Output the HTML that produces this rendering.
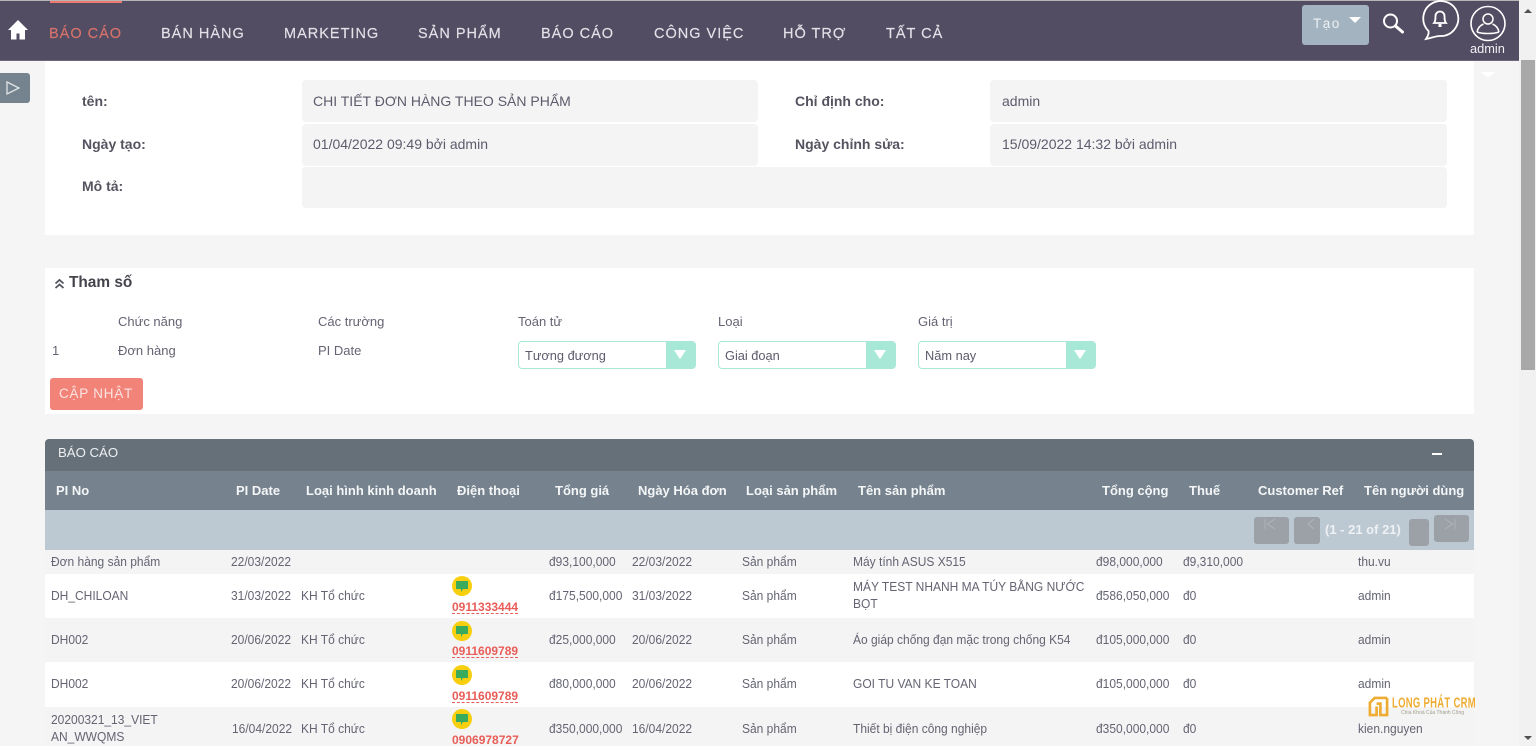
<!DOCTYPE html>
<html lang="vi"><head><meta charset="utf-8"><title>Báo cáo</title>
<style>
html,body{margin:0;padding:0;width:1536px;height:746px;overflow:hidden;background:#f5f5f5;font-family:"Liberation Sans","Noto Sans CJK SC",sans-serif;color:#5a5a6b;font-size:12px}
#w{position:absolute;left:0;top:0;width:1536px;height:746px;overflow:hidden;filter:blur(.3px)}
.a{position:absolute}
.t{position:absolute;white-space:nowrap;line-height:16px}
.n{color:#e4e2e8;font-size:14.500px;letter-spacing:1px;top:26px;-webkit-text-stroke:.15px #e4e2e8}
.l{font-size:14px;font-weight:bold;color:#55535f}
.v{font-size:14px;color:#5d5b6c}
.f{position:absolute;background:#f4f4f4;border-radius:4px}
.p{font-size:13px;color:#646473;transform:scaleX(.923);transform-origin:0 50%}
.q{font-size:13px;color:#646473}
.h{color:#f4f6f7;font-weight:bold;font-size:13px;top:483px}
.ph{color:#e85d58;font-weight:bold;font-size:12px;border-bottom:1px dashed #e85d58;line-height:12px}
.sel{position:absolute;top:341px;width:176px;height:26px;border:1px solid #a8e8d6;border-radius:4px;background:#fff}
.sel span{position:absolute;left:6px;top:6px;font-size:12.8px;line-height:16px;color:#5d5b6c;white-space:nowrap}
.sel i{position:absolute;right:0;top:0;width:29px;height:26px;background:#a8e8d6;border-radius:0 3px 3px 0}
.sel i:after{content:"";position:absolute;left:8px;top:8px;border-left:6px solid transparent;border-right:6px solid transparent;border-top:9px solid #fff}
.pg{position:absolute;background:#9ba1a6;border-radius:3px}
.r{position:absolute;left:45px;width:1429px}
</style></head><body><div id="w">

<!-- top nav -->
<div class="a" style="left:0;top:0;width:1519px;height:1px;background:#b5b5b5"></div>
<div class="a" style="left:0;top:1px;width:1519px;height:59px;background:#534d63"></div>
<div class="a" style="left:0;top:60px;width:1519px;height:1px;background:#6d6878"></div>
<div class="a" style="left:50px;top:1px;width:72px;height:2px;background:#f0796f"></div>
<svg class="a" style="left:7px;top:19px" width="22" height="22" viewBox="0 0 22 22"><path d="M11 1L1 11h3v9.500h5.500v-6h3v6H18V11h3z" fill="#fff"/></svg>
<span class="t n" style="left:49px;color:#d9726b;-webkit-text-stroke:.15px #d9726b">BÁO CÁO</span>
<span class="t n" style="left:161px">BÁN HÀNG</span>
<span class="t n" style="left:284px">MARKETING</span>
<span class="t n" style="left:418px">SẢN PHẨM</span>
<span class="t n" style="left:541px">BÁO CÁO</span>
<span class="t n" style="left:654px">CÔNG VIỆC</span>
<span class="t n" style="left:783px">HỖ TRỢ</span>
<span class="t n" style="left:886px">TẤT CẢ</span>

<div class="a" style="left:1302px;top:5px;width:67px;height:40px;background:#a3b3c0;border-radius:3px"></div>
<span class="t" style="left:1313px;top:16px;color:#eef1f3;font-size:13.5px;letter-spacing:1.500px">Tạo</span>
<div class="a" style="left:1349px;top:17px;border-left:6px solid transparent;border-right:6px solid transparent;border-top:6px solid #fff"></div>
<svg class="a" style="left:1380px;top:11px" width="26" height="24" viewBox="0 0 26 24"><circle cx="10.500" cy="10" r="6.500" fill="none" stroke="#fff" stroke-width="2"/><path d="M15.500 15l7 6" stroke="#fff" stroke-width="3" stroke-linecap="round"/></svg>
<svg class="a" style="left:1420px;top:0" width="40" height="42" viewBox="0 0 40 42"><path d="M6 39c2-3 3-6 2.500-8A17.500 17.500 0 1 1 20 36c-4 0-9 2-14 3z" fill="none" stroke="#fff" stroke-width="1.800"/><path d="M14 23c1.500-2 1.500-4 1.500-7a4.500 4.500 0 0 1 9 0c0 3 0 5 1.500 7z" fill="none" stroke="#fff" stroke-width="1.800"/><rect x="18.500" y="24" width="3" height="3" fill="#fff"/></svg>
<svg class="a" style="left:1469px;top:5px" width="38" height="38" viewBox="0 0 38 38"><circle cx="19" cy="18.500" r="17" fill="none" stroke="#fff" stroke-width="1.600"/><circle cx="19" cy="14" r="5" fill="none" stroke="#fff" stroke-width="1.500"/><path d="M8 27c1-5 4-7 6.500-8M30 27c-1-5-4-7-6.500-8M8 27c5 2 17 2 22 0" fill="none" stroke="#fff" stroke-width="1.500"/></svg>
<span class="t" style="left:1470px;top:41px;color:#f1f0f3;font-size:12.8px">admin</span>

<!-- scrollbar -->
<div class="a" style="left:1519px;top:0;width:17px;height:746px;background:#f1f1f1"></div>
<div class="a" style="left:1521px;top:60px;width:14px;height:310px;background:#a8a8a8"></div>
<div class="a" style="left:1524px;top:9px;border-left:4px solid transparent;border-right:4px solid transparent;border-bottom:4px solid #505050"></div>
<div class="a" style="left:1524px;top:736px;border-left:4px solid transparent;border-right:4px solid transparent;border-top:4px solid #505050"></div>
<div class="a" style="left:1481px;top:72px;border-left:7px solid transparent;border-right:7px solid transparent;border-top:6px solid #fff"></div>

<!-- side toggle -->
<div class="a" style="left:0;top:73px;width:30px;height:30px;background:#75838e;border-radius:0 3px 3px 0"></div>
<svg class="a" style="left:5px;top:80px" width="16" height="16" viewBox="0 0 16 16"><path d="M2 2l12 6-12 6z" fill="none" stroke="#dfe5e8" stroke-width="1.300"/></svg>

<!-- detail panel -->
<div class="a" style="left:45px;top:61px;width:1429px;height:174px;background:#fff"></div>
<span class="t l" style="left:82px;top:93px">tên:</span>
<div class="f" style="left:302px;top:80px;width:456px;height:42px"></div>
<span class="t v" style="left:313px;top:93px">CHI TIẾT ĐƠN HÀNG THEO SẢN PHẨM</span>
<span class="t l" style="left:795px;top:93px">Chỉ định cho:</span>
<div class="f" style="left:990px;top:80px;width:457px;height:42px"></div>
<span class="t v" style="left:1002px;top:93px">admin</span>
<span class="t l" style="left:82px;top:136px">Ngày tạo:</span>
<div class="f" style="left:302px;top:124px;width:456px;height:42px"></div>
<span class="t v" style="left:313px;top:136px">01/04/2022 09:49 bởi admin</span>
<span class="t l" style="left:795px;top:136px">Ngày chỉnh sửa:</span>
<div class="f" style="left:990px;top:124px;width:457px;height:42px"></div>
<span class="t v" style="left:1002px;top:136px">15/09/2022 14:32 bởi admin</span>
<span class="t l" style="left:82px;top:178px">Mô tả:</span>
<div class="f" style="left:302px;top:167px;width:1145px;height:41px"></div>

<!-- params panel -->
<div class="a" style="left:45px;top:268px;width:1429px;height:146px;background:#fff"></div>
<svg class="a" style="left:54px;top:278px" width="11" height="11" viewBox="0 0 11 11"><path d="M1.500 5.500L5.500 2l4 3.500M1.500 10L5.500 6.500l4 3.500" fill="none" stroke="#55555f" stroke-width="1.800"/></svg>
<span class="t" style="left:69px;top:275px;font-size:15.400px;font-weight:bold;color:#44444c">Tham số</span>
<span class="t q" style="left:118px;top:314px">Chức năng</span>
<span class="t q" style="left:318px;top:314px">Các trường</span>
<span class="t q" style="left:518px;top:314px">Toán tử</span>
<span class="t q" style="left:718px;top:314px">Loại</span>
<span class="t q" style="left:918px;top:314px">Giá trị</span>
<span class="t q" style="left:52px;top:343px">1</span>
<span class="t q" style="left:118px;top:343px">Đơn hàng</span>
<span class="t q" style="left:318px;top:343px">PI Date</span>
<div class="sel" style="left:518px"><span>Tương đương</span><i></i></div>
<div class="sel" style="left:718px"><span>Giai đoạn</span><i></i></div>
<div class="sel" style="left:918px"><span>Năm nay</span><i></i></div>
<div class="a" style="left:50px;top:378px;width:93px;height:32px;background:#f28379;border-radius:3px"></div>
<span class="t" style="left:59px;top:386px;color:#fbe4e1;font-size:13.5px;letter-spacing:.75px">CẬP NHẬT</span>

<!-- report -->
<div class="a" style="left:45px;top:439px;width:1429px;height:32px;background:#657079;border-radius:4px 4px 0 0"></div>
<span class="t" style="left:58px;top:445px;color:#eef0f2;font-size:13.2px">BÁO CÁO</span>
<div class="a" style="left:1432px;top:453px;width:10px;height:2px;background:#fff"></div>
<div class="a" style="left:45px;top:471px;width:1429px;height:39px;background:#76838e"></div>
<span class="t h" style="left:56px">PI No</span>
<span class="t h" style="left:236px">PI Date</span>
<span class="t h" style="left:306px">Loại hình kinh doanh</span>
<span class="t h" style="left:457px">Điện thoại</span>
<span class="t h" style="left:555px">Tổng giá</span>
<span class="t h" style="left:638px">Ngày Hóa đơn</span>
<span class="t h" style="left:746px">Loại sản phẩm</span>
<span class="t h" style="left:858px">Tên sản phẩm</span>
<span class="t h" style="left:1102px">Tổng cộng</span>
<span class="t h" style="left:1189px">Thuế</span>
<span class="t h" style="left:1258px">Customer Ref</span>
<span class="t h" style="left:1364px">Tên người dùng</span>

<div class="a" style="left:45px;top:510px;width:1429px;height:40px;background:#bcc8d2"></div>
<div class="pg" style="left:1254px;top:517px;width:35px;height:27px"></div>
<div class="pg" style="left:1294px;top:517px;width:26px;height:27px"></div>
<div class="pg" style="left:1409px;top:519px;width:20px;height:27px"></div>
<div class="pg" style="left:1434px;top:515px;width:35px;height:27px"></div>
<svg class="a" style="left:1254px;top:515px" width="215" height="20" viewBox="0 0 215 20"><path d="M11 4v10M21 4l-8 5 8 5M60 4l-6 5 6 5M191 4l8 5-8 5M201 4v10" fill="none" stroke="#a9b2b8" stroke-width="1.200"/></svg>
<span class="t" style="left:1325px;top:522px;color:#eef1f4;font-weight:bold;font-size:13px">(1 - 21 of 21)</span>

<!-- rows -->
<div class="r" style="top:550px;height:24px;background:#f4f4f4"></div>
<div class="r" style="top:574px;height:44px;background:#fff"></div>
<div class="r" style="top:618px;height:44px;background:#f4f4f4"></div>
<div class="r" style="top:662px;height:45px;background:#fff"></div>
<div class="r" style="top:707px;height:39px;background:#f4f4f4"></div>

<span class="t p" style="left:51px;top:554px">Đơn hàng sản phẩm</span>
<span class="t p" style="left:231px;top:554px">22/03/2022</span>
<span class="t p" style="left:549px;top:554px">đ93,100,000</span>
<span class="t p" style="left:632px;top:554px">22/03/2022</span>
<span class="t p" style="left:742px;top:554px">Sản phẩm</span>
<span class="t p" style="left:853px;top:554px">Máy tính ASUS X515</span>
<span class="t p" style="left:1096px;top:554px">đ98,000,000</span>
<span class="t p" style="left:1183px;top:554px">đ9,310,000</span>
<span class="t p" style="left:1358px;top:554px">thu.vu</span>

<span class="t p" style="left:51px;top:588px">DH_CHILOAN</span>
<span class="t p" style="left:231px;top:588px">31/03/2022</span>
<span class="t p" style="left:301px;top:588px">KH Tổ chức</span>
<span class="t p" style="left:549px;top:588px">đ175,500,000</span>
<span class="t p" style="left:632px;top:588px">31/03/2022</span>
<span class="t p" style="left:742px;top:588px">Sản phẩm</span>
<span class="t p" style="left:853px;top:579px">MÁY TEST NHANH MA TÚY BẰNG NƯỚC</span>
<span class="t p" style="left:853px;top:596px">BỌT</span>
<span class="t p" style="left:1096px;top:588px">đ586,050,000</span>
<span class="t p" style="left:1183px;top:588px">đ0</span>
<span class="t p" style="left:1358px;top:588px">admin</span>

<span class="t p" style="left:51px;top:632px">DH002</span>
<span class="t p" style="left:231px;top:632px">20/06/2022</span>
<span class="t p" style="left:301px;top:632px">KH Tổ chức</span>
<span class="t p" style="left:549px;top:632px">đ25,000,000</span>
<span class="t p" style="left:632px;top:632px">20/06/2022</span>
<span class="t p" style="left:742px;top:632px">Sản phẩm</span>
<span class="t p" style="left:853px;top:632px">Áo giáp chống đạn mặc trong chống K54</span>
<span class="t p" style="left:1096px;top:632px">đ105,000,000</span>
<span class="t p" style="left:1183px;top:632px">đ0</span>
<span class="t p" style="left:1358px;top:632px">admin</span>

<span class="t p" style="left:51px;top:676px">DH002</span>
<span class="t p" style="left:231px;top:676px">20/06/2022</span>
<span class="t p" style="left:301px;top:676px">KH Tổ chức</span>
<span class="t p" style="left:549px;top:676px">đ80,000,000</span>
<span class="t p" style="left:632px;top:676px">20/06/2022</span>
<span class="t p" style="left:742px;top:676px">Sản phẩm</span>
<span class="t p" style="left:853px;top:676px">GOI TU VAN KE TOAN</span>
<span class="t p" style="left:1096px;top:676px">đ105,000,000</span>
<span class="t p" style="left:1183px;top:676px">đ0</span>
<span class="t p" style="left:1358px;top:676px">admin</span>

<span class="t p" style="left:51px;top:712px">20200321_13_VIET</span>
<span class="t p" style="left:51px;top:729px">AN_WWQMS</span>
<span class="t p" style="left:232px;top:721px">16/04/2022</span>
<span class="t p" style="left:301px;top:721px">KH Tổ chức</span>
<span class="t p" style="left:549px;top:721px">đ350,000,000</span>
<span class="t p" style="left:632px;top:721px">16/04/2022</span>
<span class="t p" style="left:742px;top:721px">Sản phẩm</span>
<span class="t p" style="left:853px;top:721px">Thiết bị điện công nghiệp</span>
<span class="t p" style="left:1096px;top:721px">đ350,000,000</span>
<span class="t p" style="left:1183px;top:721px">đ0</span>
<span class="t p" style="left:1358px;top:721px">kien.nguyen</span>

<!-- phone icons -->
<svg class="a" style="left:452px;top:576px" width="20" height="20" viewBox="0 0 20 20"><circle cx="10" cy="10" r="10" fill="#f7cf0f"/><path d="M4 5h12v8h-5l-2 3v-3H4z" fill="#3aaa5c"/></svg>
<svg class="a" style="left:452px;top:621px" width="20" height="20" viewBox="0 0 20 20"><circle cx="10" cy="10" r="10" fill="#f7cf0f"/><path d="M4 5h12v8h-5l-2 3v-3H4z" fill="#3aaa5c"/></svg>
<svg class="a" style="left:452px;top:665px" width="20" height="20" viewBox="0 0 20 20"><circle cx="10" cy="10" r="10" fill="#f7cf0f"/><path d="M4 5h12v8h-5l-2 3v-3H4z" fill="#3aaa5c"/></svg>
<svg class="a" style="left:452px;top:709px" width="20" height="20" viewBox="0 0 20 20"><circle cx="10" cy="10" r="10" fill="#f7cf0f"/><path d="M4 5h12v8h-5l-2 3v-3H4z" fill="#3aaa5c"/></svg>
<span class="t ph" style="left:452px;top:601px">0911333444</span>
<span class="t ph" style="left:452px;top:645px">0911609789</span>
<span class="t ph" style="left:452px;top:690px">0911609789</span>
<span class="t ph" style="left:452px;top:734px;border-bottom:0">0906978727</span>

<!-- watermark logo -->
<svg class="a" style="left:1368px;top:696px" width="21" height="21" viewBox="0 0 22 22"><path d="M20 2H7L2 7v13h7v-9M20 2v18h-7V8H9" fill="none" stroke="#eeac33" stroke-width="2.800"/></svg>
<span class="t" style="left:1392px;top:695px;color:#eeac33;font-weight:bold;font-size:13px;letter-spacing:.4px;transform-origin:0 50%;transform:scale(.73,1.15)">LONG PHÁT CRM</span>
<span class="t" style="left:1401px;top:709px;color:#a09a8c;font-size:5px;line-height:9px">Chìa Khoá Của Thành Công</span>
</div></body></html>
